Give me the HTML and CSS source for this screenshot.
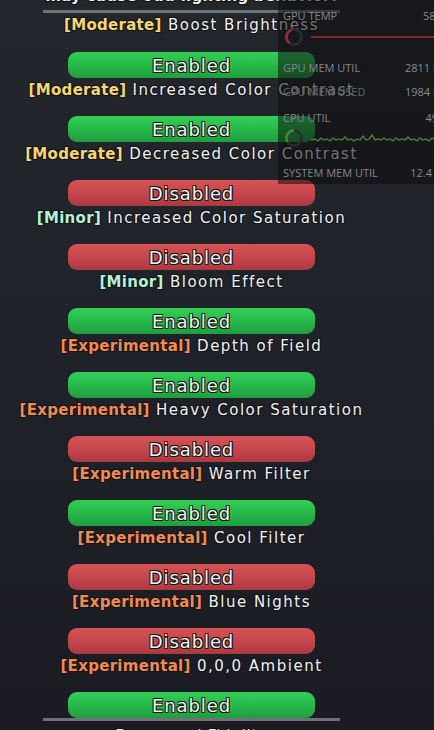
FILE: index.html
```html
<!DOCTYPE html>
<html>
<head>
<meta charset="utf-8">
<link rel="stylesheet" href="styles.css">
</head>
<body>
<main class="list">
  <div class="head">may cause odd lighting behavior!</div>
  <div class="rule"></div>
  <div class="label first"><span class="tag moderate">[Moderate]</span> Boost Brightness</div>

  <div class="setting">
    <div class="btn on">Enabled</div>
    <div class="label"><span class="tag moderate">[Moderate]</span> Increased Color Contrast</div>
  </div>
  <div class="setting">
    <div class="btn on">Enabled</div>
    <div class="label"><span class="tag moderate">[Moderate]</span> Decreased Color Contrast</div>
  </div>
  <div class="setting">
    <div class="btn off">Disabled</div>
    <div class="label"><span class="tag minor">[Minor]</span> Increased Color Saturation</div>
  </div>
  <div class="setting">
    <div class="btn off">Disabled</div>
    <div class="label"><span class="tag minor">[Minor]</span> Bloom Effect</div>
  </div>
  <div class="setting">
    <div class="btn on">Enabled</div>
    <div class="label"><span class="tag exp">[Experimental]</span> Depth of Field</div>
  </div>
  <div class="setting">
    <div class="btn on">Enabled</div>
    <div class="label"><span class="tag exp">[Experimental]</span> Heavy Color Saturation</div>
  </div>
  <div class="setting">
    <div class="btn off">Disabled</div>
    <div class="label"><span class="tag exp">[Experimental]</span> Warm Filter</div>
  </div>
  <div class="setting">
    <div class="btn on">Enabled</div>
    <div class="label"><span class="tag exp">[Experimental]</span> Cool Filter</div>
  </div>
  <div class="setting">
    <div class="btn off">Disabled</div>
    <div class="label"><span class="tag exp">[Experimental]</span> Blue Nights</div>
  </div>
  <div class="setting">
    <div class="btn off">Disabled</div>
    <div class="label"><span class="tag exp">[Experimental]</span> 0,0,0 Ambient</div>
  </div>
  <div class="setting last">
    <div class="btn on">Enabled</div>
  </div>
  <div class="rule bottom"></div>
  <div class="section">Decreased Fidelity</div>
</main>

<aside class="perf">
  <div class="metric">
    <span class="name">GPU TEMP</span><span class="val">58 °C</span>
  </div>
  <div class="graph g1">
    <svg class="ring" width="20" height="20" viewBox="0 0 20 20">
      <circle cx="10" cy="10" r="7.5" fill="none" stroke="#2a2c30" stroke-width="2.6"/>
      <path d="M5.6 16.1 A7.5 7.5 0 0 1 7.2 3.0" fill="none" stroke="#a3262e" stroke-width="2.6"/>
    </svg>
    <div class="line red"></div>
  </div>
  <div class="metric m2">
    <span class="name">GPU MEM UTIL</span><span class="val">2811 MB</span>
  </div>
  <div class="metric m3">
    <span class="name">GPU MEM USED</span><span class="val">1984 MB</span>
  </div>
  <div class="metric m4">
    <span class="name">CPU UTIL</span><span class="val">49 %</span>
  </div>
  <div class="graph g2">
    <svg class="ring" width="20" height="20" viewBox="0 0 20 20">
      <circle cx="10" cy="10" r="7.5" fill="none" stroke="#2a2c30" stroke-width="2.6"/>
      <path d="M3.5 13.8 A7.5 7.5 0 0 1 10 2.5" fill="none" stroke="#3f8f2a" stroke-width="2.6"/>
    </svg>
    <svg class="spark" width="130" height="12" viewBox="0 0 130 12">
      <polyline fill="none" stroke="#4c8a32" stroke-width="1.3" points="0,8 4,7 7,9 10,6 13,8 16,7 19,9 22,6 25,8 28,7 31,8 34,5 37,8 40,7 43,9 46,7 49,8 52,4 55,8 58,7 61,3 64,8 67,7 70,8 73,6 76,8 79,7 82,9 85,6 88,8 91,7 94,8 97,5 100,8 103,7 106,9 109,6 112,8 115,7 118,9 121,6 124,8 127,7 130,8"/>
    </svg>
  </div>
  <div class="metric m5">
    <span class="name">SYSTEM MEM UTIL</span><span class="val">12.4 GB</span>
  </div>
</aside>
</body>
</html>
```

FILE: styles.css
```css
html, body {
  margin: 0;
  padding: 0;
}
body {
  width: 434px;
  height: 730px;
  overflow: hidden;
  position: relative;
  background: linear-gradient(180deg, #23272c 0%, #1f2228 50%, #1b1c23 100%);
  font-family: "DejaVu Sans", "Liberation Sans", sans-serif;
  color: #eef2f4;
}
.list {
  width: 383px;
  display: flex;
  flex-direction: column;
  align-items: center;
  margin-top: -14px;
}
.head {
  font-size: 15px;
  font-weight: bold;
  line-height: 20px;
  height: 22px;
  letter-spacing: 0.3px;
  white-space: nowrap;
  color: #f2f4f6;
  text-shadow: 1px 1px 0 #111, -1px -1px 0 #111, 1px -1px 0 #111, -1px 1px 0 #111;
}
.section {
  height: 24px;
  line-height: 24px;
  margin-top: 3px;
  font-size: 15px;
  letter-spacing: 0.8px;
  white-space: nowrap;
  color: #eef1f3;
  text-shadow: 1px 1px 0 #15161a, -1px -1px 0 #15161a, 1px -1px 0 #15161a, -1px 1px 0 #15161a;
}
.rule {
  width: 297px;
  height: 3px;
  margin-top: 2px;
  background: #6d7278;
}
.rule.bottom {
  margin-top: 0;
}
.label {
  height: 24px;
  line-height: 24px;
  font-size: 15px;
  letter-spacing: 1.5px;
  white-space: nowrap;
  text-align: center;
  color: #eef1f3;
  text-shadow: 1px 1px 0 #15161a, -1px -1px 0 #15161a, 1px -1px 0 #15161a, -1px 1px 0 #15161a;
}
.label.first {
  margin-bottom: 15px;
}
.tag {
  font-weight: bold;
  letter-spacing: 0.3px;
}
.tag.moderate { color: #f6d573; }
.tag.minor { color: #b2f2d6; }
.tag.exp { color: #f28a52; }
.setting {
  display: flex;
  flex-direction: column;
  align-items: center;
  margin-bottom: 14px;
}
.setting.last {
  margin-bottom: 0;
}
.btn {
  width: 247px;
  height: 26px;
  border-radius: 9px;
  text-align: center;
  line-height: 27px;
  font-size: 18px;
  letter-spacing: 0.9px;
  color: #eef3ee;
  text-shadow: 1px 1px 0 #161616, -1px -1px 0 #161616, 1px -1px 0 #161616, -1px 1px 0 #161616;
}
.btn.on {
  background: linear-gradient(180deg, #31cf58 0%, #27b447 60%, #1f9e3e 100%);
}
.btn.off {
  background: linear-gradient(180deg, #d65255 0%, #c2444a 60%, #a93a40 100%);
}

/* performance overlay */
.perf {
  position: absolute;
  left: 278px;
  top: 0;
  width: 176px;
  height: 184px;
  background: rgba(12, 13, 15, 0.55);
  font-family: "Open Sans", "Noto Sans", sans-serif;
  font-size: 11px;
  color: #83888d;
  box-sizing: border-box;
  padding: 9px 0 0 5px;
}
.metric {
  display: flex;
  justify-content: space-between;
  height: 14px;
  line-height: 14px;
  padding-right: 4px;
  white-space: nowrap;
}
.metric .val {
  font-size: 11px;
  color: #868b8f;
}
.graph {
  display: flex;
  align-items: center;
  gap: 7px;
  height: 20px;
}
.g1 { margin-top: 4px; }
.g2 { margin-top: 3px; }
.ring { flex: none; margin-left: 1px; }
.line.red {
  flex: none;
  width: 150px;
  height: 2px;
  background: #87242d;
}
.spark { flex: none; }
.m2 { margin-top: 14px; }
.m3 { margin-top: 10px; color: #62676b; }
.m4 { margin-top: 12px; }
.m5 { margin-top: 18px; }
```
